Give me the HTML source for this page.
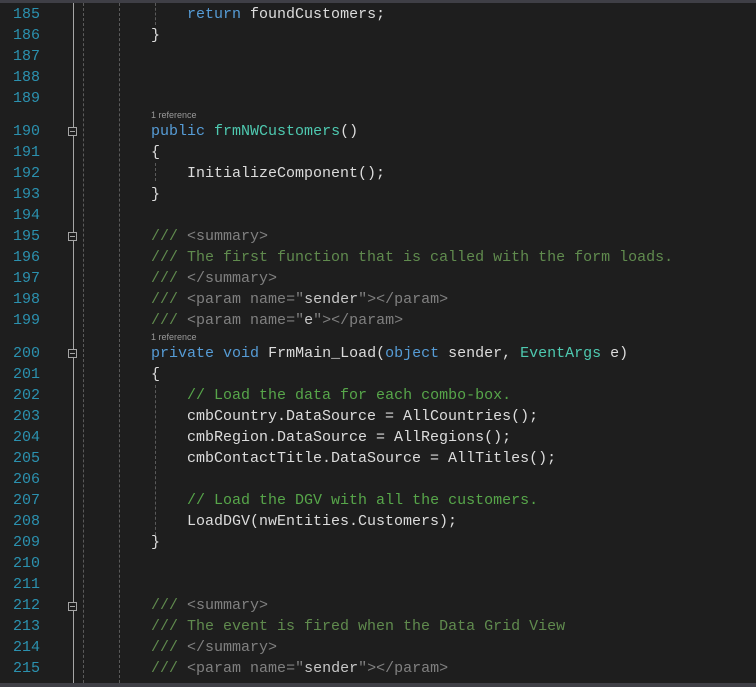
<!DOCTYPE html>
<html><head><meta charset="utf-8"><style>
body{margin:0;width:756px;height:687px;background:#1e1e1e;overflow:hidden;position:relative;font-family:"Liberation Mono",monospace;font-size:15px}
.top{position:absolute;left:0;top:0;width:756px;height:3px;background:#3f3f46}
.bot{position:absolute;left:0;top:683px;width:756px;height:4px;background:#3f3f46}
.ln{position:absolute;left:0;width:40px;text-align:right;color:#2b91af;height:21px;line-height:21px}
.c{position:absolute;left:79px;white-space:pre;color:#dcdcdc;height:21px;line-height:21px}
.cl{position:absolute;left:151px;font-family:"Liberation Sans",sans-serif;font-size:9px;color:#999;line-height:12px}
.k{color:#569cd6}.t{color:#4ec9b0}.g{color:#57a64a}.d{color:#608b4e}.x{color:#808080}.w{color:#c8c8c8}
.gl{position:absolute;left:73px;width:1px;background:#a5a5a5}
.ig{position:absolute;width:0;border-left:1px dashed #5a5a5a}
.fb{position:absolute;left:68px;width:9px;height:9px;border:1px solid #a5a5a5;background:#1e1e1e;box-sizing:border-box}
.fb:after{content:"";position:absolute;left:1px;top:3px;width:5px;height:1px;background:#a5a5a5}
</style></head><body>
<div class="top"></div>
<div class="gl" style="top:3px;height:680px"></div>
<div class="ig" style="left:83px;top:3px;height:680px"></div>
<div class="ig" style="left:119px;top:3px;height:680px"></div>
<div class="ig" style="left:155px;top:3px;height:22px"></div>
<div class="ig" style="left:155px;top:163px;height:18px"></div>
<div class="ig" style="left:155px;top:385px;height:150px"></div>
<div class="fb" style="top:127px"></div>
<div class="fb" style="top:232px"></div>
<div class="fb" style="top:349px"></div>
<div class="fb" style="top:602px"></div>

<div class="ln" style="top:3.5px">185</div><div class="c" style="top:3.5px">            <span class="k">return</span> foundCustomers;</div>
<div class="ln" style="top:24.5px">186</div><div class="c" style="top:24.5px">        }</div>
<div class="ln" style="top:45.5px">187</div>
<div class="ln" style="top:66.5px">188</div>
<div class="ln" style="top:87.5px">189</div>
<div class="cl" style="top:109px">1 reference</div>
<div class="ln" style="top:120.5px">190</div><div class="c" style="top:120.5px">        <span class="k">public</span> <span class="t">frmNWCustomers</span>()</div>
<div class="ln" style="top:141.5px">191</div><div class="c" style="top:141.5px">        {</div>
<div class="ln" style="top:162.5px">192</div><div class="c" style="top:162.5px">            InitializeComponent();</div>
<div class="ln" style="top:183.5px">193</div><div class="c" style="top:183.5px">        }</div>
<div class="ln" style="top:204.5px">194</div>
<div class="ln" style="top:225.5px">195</div><div class="c" style="top:225.5px">        <span class="d">///</span> <span class="x">&lt;summary&gt;</span></div>
<div class="ln" style="top:246.5px">196</div><div class="c" style="top:246.5px">        <span class="d">/// The first function that is called with the form loads.</span></div>
<div class="ln" style="top:267.5px">197</div><div class="c" style="top:267.5px">        <span class="d">///</span> <span class="x">&lt;/summary&gt;</span></div>
<div class="ln" style="top:288.5px">198</div><div class="c" style="top:288.5px">        <span class="d">///</span> <span class="x">&lt;param name="</span><span class="w">sender</span><span class="x">"&gt;&lt;/param&gt;</span></div>
<div class="ln" style="top:309.5px">199</div><div class="c" style="top:309.5px">        <span class="d">///</span> <span class="x">&lt;param name="</span><span class="w">e</span><span class="x">"&gt;&lt;/param&gt;</span></div>
<div class="cl" style="top:331px">1 reference</div>
<div class="ln" style="top:342.5px">200</div><div class="c" style="top:342.5px">        <span class="k">private</span> <span class="k">void</span> FrmMain_Load(<span class="k">object</span> sender, <span class="t">EventArgs</span> e)</div>
<div class="ln" style="top:363.5px">201</div><div class="c" style="top:363.5px">        {</div>
<div class="ln" style="top:384.5px">202</div><div class="c" style="top:384.5px">            <span class="g">// Load the data for each combo-box.</span></div>
<div class="ln" style="top:405.5px">203</div><div class="c" style="top:405.5px">            cmbCountry.DataSource = AllCountries();</div>
<div class="ln" style="top:426.5px">204</div><div class="c" style="top:426.5px">            cmbRegion.DataSource = AllRegions();</div>
<div class="ln" style="top:447.5px">205</div><div class="c" style="top:447.5px">            cmbContactTitle.DataSource = AllTitles();</div>
<div class="ln" style="top:468.5px">206</div>
<div class="ln" style="top:489.5px">207</div><div class="c" style="top:489.5px">            <span class="g">// Load the DGV with all the customers.</span></div>
<div class="ln" style="top:510.5px">208</div><div class="c" style="top:510.5px">            LoadDGV(nwEntities.Customers);</div>
<div class="ln" style="top:531.5px">209</div><div class="c" style="top:531.5px">        }</div>
<div class="ln" style="top:552.5px">210</div>
<div class="ln" style="top:573.5px">211</div>
<div class="ln" style="top:594.5px">212</div><div class="c" style="top:594.5px">        <span class="d">///</span> <span class="x">&lt;summary&gt;</span></div>
<div class="ln" style="top:615.5px">213</div><div class="c" style="top:615.5px">        <span class="d">/// The event is fired when the Data Grid View</span></div>
<div class="ln" style="top:636.5px">214</div><div class="c" style="top:636.5px">        <span class="d">///</span> <span class="x">&lt;/summary&gt;</span></div>
<div class="ln" style="top:657.5px">215</div><div class="c" style="top:657.5px">        <span class="d">///</span> <span class="x">&lt;param name="</span><span class="w">sender</span><span class="x">"&gt;&lt;/param&gt;</span></div>
<div class="bot"></div>
</body></html>
